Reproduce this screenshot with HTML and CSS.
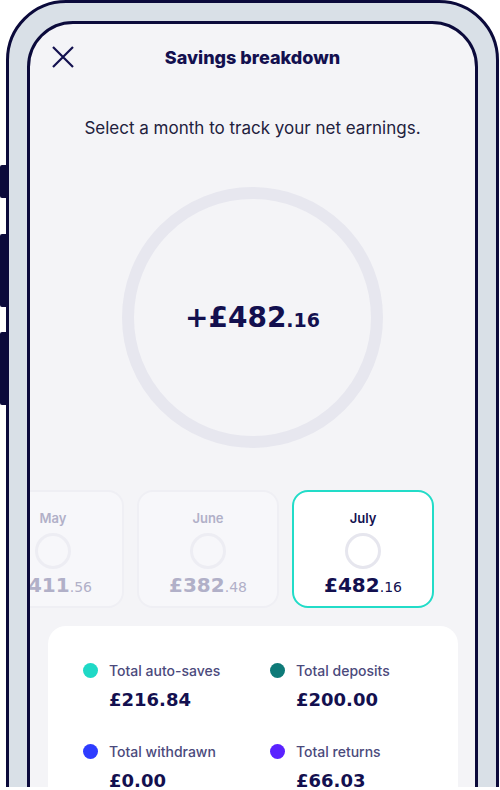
FILE: index.html
```html
<!DOCTYPE html>
<html>
<head>
<meta name="viewport" content="width=device-width, initial-scale=1">
<link rel="stylesheet" href="styles.css">
</head>
<body>
<div class="stage">
  <span class="side-btn b1"></span>
  <span class="side-btn b2"></span>
  <span class="side-btn b3"></span>
  <div class="phone">
    <div class="screen">
      <div class="top">
        <svg class="close" width="22" height="22" viewBox="0 0 22 22"><path d="M1 1L21 21M21 1L1 21" stroke="#13104f" stroke-width="2.2" fill="none"/></svg>
        <h1>Savings breakdown</h1>
      </div>
      <p class="lead">Select a month to track your net earnings.</p>

      <div class="ring">
        <span class="big">+£482<small>.16</small></span>
      </div>

      <div class="months">
        <div class="month">
          <span class="mname">May</span>
          <span class="dot-ring"></span>
          <span class="amt">£411<small>.56</small></span>
        </div>
        <div class="month">
          <span class="mname">June</span>
          <span class="dot-ring"></span>
          <span class="amt">£382<small>.48</small></span>
        </div>
        <div class="month on">
          <span class="mname">July</span>
          <span class="dot-ring"></span>
          <span class="amt">£482<small>.16</small></span>
        </div>
      </div>

      <div class="panel">
        <div class="stat">
          <span class="label"><i class="c1"></i>Total auto-saves</span>
          <span class="val">£216.84</span>
        </div>
        <div class="stat">
          <span class="label"><i class="c2"></i>Total deposits</span>
          <span class="val">£200.00</span>
        </div>
        <div class="stat">
          <span class="label"><i class="c3"></i>Total withdrawn</span>
          <span class="val">£0.00</span>
        </div>
        <div class="stat">
          <span class="label"><i class="c4"></i>Total returns</span>
          <span class="val">£66.03</span>
        </div>
      </div>
    </div>
  </div>
</div>
</body>
</html>
```

FILE: styles.css
```css
* {box-sizing: border-box;}
body {margin: 0; background: #fff; font-family: Inter, "Liberation Sans", Arial, sans-serif;}

.stage {
  position: relative;
  height: 787px;
  overflow: hidden;
}

.phone {
  margin-left: 6px;
  width: 493px;
  height: 900px;
  padding: 18px 18px 0;
  background: #d9e0e7;
  border: 3px solid #0b0a3b;
  border-radius: 60px 60px 0 0;
}

.side-btn {
  position: absolute;
  left: 0;
  width: 9px;
  background: #0b0a3b;
  border-radius: 2px 0 0 2px;
}
.b1 {top: 165px; height: 33px;}
.b2 {top: 234px; height: 73px;}
.b3 {top: 332px; height: 73px;}

.screen {
  height: 880px;
  background: #f4f4f7;
  border: 3px solid #0b0a3b;
  border-radius: 46px 46px 0 0;
  overflow: hidden;
  color: #13104f;
}

.top {
  display: flex;
  align-items: center;
  height: 66px;
  padding: 0 0 0 22px;
}
.close {flex: none;}
.top h1 {
  flex: 1;
  margin: 0 44px 0 0;
  text-align: center;
  font-size: 18px;
  font-weight: 800;
}

.lead {
  margin: 28px 0 0;
  text-align: center;
  font-size: 17px;
  color: #22213d;
}

.ring {
  margin: 49px auto 0;
  width: 261px;
  height: 261px;
  border: 12px solid #e7e7ef;
  border-radius: 50%;
  display: flex;
  align-items: center;
  justify-content: center;
}
.big {
  font-family: "DejaVu Sans", Verdana, sans-serif;
  font-weight: 700;
  font-size: 28px;
  color: #13104f;
}
.big small {font-size: 19px;}

.months {
  display: flex;
  justify-content: flex-end;
  gap: 13px;
  margin-top: 42px;
  padding-right: 41px;
}
.month {
  flex: none;
  width: 142px;
  height: 118px;
  display: flex;
  flex-direction: column;
  align-items: center;
  background: #f7f7fa;
  border: 2px solid #efeff4;
  border-radius: 16px;
  color: #b1b0c8;
  padding-top: 18px;
}
.month.on {
  background: #fff;
  border-color: #22dcc8;
  color: #13104f;
}
.mname {font-size: 13px; font-weight: 600;}
.dot-ring {
  margin-top: 7px;
  width: 36px;
  height: 36px;
  border: 3px solid #ededf3;
  border-radius: 50%;
}
.on .dot-ring {border-color: #e6e6ee;}
.amt {
  margin-top: 4px;
  font-family: "DejaVu Sans", Verdana, sans-serif;
  font-weight: 700;
  font-size: 20px;
}
.amt small {font-weight: 400; font-size: 14px;}

.panel {
  margin: 18px 17px 0 18px;
  background: #fff;
  border-radius: 18px;
  padding: 36px 20px 40px 35px;
  display: grid;
  grid-template-columns: 187px 1fr;
  row-gap: 33px;
}
.stat {display: flex; flex-direction: column;}
.label {
  display: flex;
  align-items: center;
  font-size: 14px;
  font-weight: 500;
  color: #4b4a7c;
}
.label i {
  width: 15px;
  height: 15px;
  border-radius: 50%;
  margin-right: 11px;
}
.c1 {background: #1fd9c6;}
.c2 {background: #0e7a78;}
.c3 {background: #2e3cff;}
.c4 {background: #5a22ff;}
.val {
  margin: 10px 0 0 26px;
  font-family: "DejaVu Sans", Verdana, sans-serif;
  font-weight: 700;
  font-size: 18px;
  color: #13104f;
}
```
